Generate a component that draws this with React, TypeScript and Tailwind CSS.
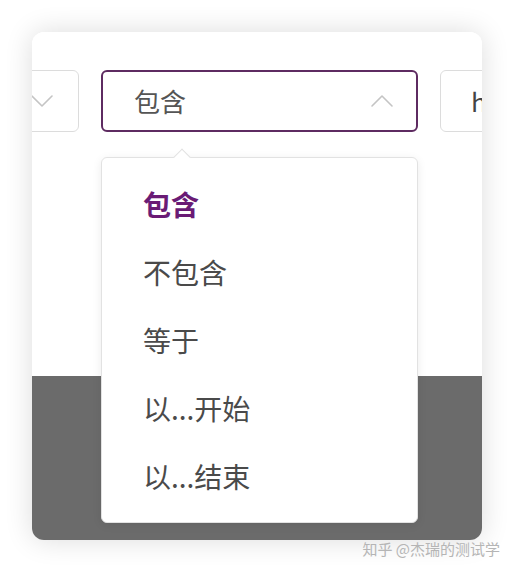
const items = ["包含", "不包含", "等于", "以...开始", "以...结束"];

function Chevron({ up }: { up?: boolean }) {
  return (
    <svg width="24" height="14" viewBox="0 0 24 14" fill="none" aria-hidden="true">
      <path
        d={up ? "M2 12 L12 2 L22 12" : "M2 2 L12 12 L22 2"}
        stroke="#c4c4c4"
        strokeWidth="1.6"
        strokeLinecap="round"
        strokeLinejoin="round"
      />
    </svg>
  );
}

export default function App() {
  return (
    <div className="relative h-[572px] w-[514px] overflow-hidden bg-white pl-8 pt-8 font-['Noto_Sans_CJK_SC','Noto_Sans',sans-serif]">
      <div className="relative flex h-[508px] w-[450px] flex-col overflow-hidden rounded-[12px] bg-white shadow-[0_0_28px_rgba(0,0,0,0.14)]">
        <div className="h-[344px] bg-white pt-[38px]">
          <div className="flex items-start gap-[22px]">
            <div className="-ml-[60px] flex h-[62px] w-[107px] shrink-0 items-center justify-end rounded-[6px] border border-[#dcdcdc] pr-[24px]">
              <Chevron />
            </div>
            <div className="flex h-[62px] w-[317px] shrink-0 items-center justify-between rounded-[6px] border-2 border-[#5e2b61] pl-[31px] pr-[22px]">
              <span className="text-[26px] leading-none text-[#555]">包含</span>
              <Chevron up />
            </div>
            <div className="flex h-[62px] w-[120px] shrink-0 items-center rounded-[6px] border border-[#dcdcdc] pl-[30px]">
              <span className="text-[26px] leading-none text-[#444]">h</span>
            </div>
          </div>
        </div>
        <div className="flex-1 bg-[#6b6b6b]" />

        <div className="absolute left-[69px] top-[125px] w-[317px] rounded-[6px] border border-[#e2e2e2] bg-white py-[12px] shadow-[0_2px_10px_rgba(0,0,0,0.08)]">
          <div className="absolute -top-[7px] left-[74px] h-[12px] w-[12px] rotate-45 border-l border-t border-[#e2e2e2] bg-white" />
          {items.map((t, i) => (
            <div
              key={t}
              className={
                i === 0
                  ? "flex h-[68px] items-center pl-[41px] text-[28px] font-bold text-[#6a1b75]"
                  : "flex h-[68px] items-center pl-[41px] text-[28px] text-[#4a4a4a]"
              }
            >
              {t}
            </div>
          ))}
        </div>
      </div>
      <div className="absolute right-[14px] top-[538px] text-[15px] text-[#b5b5b5]">
        知乎 @杰瑞的测试学
      </div>
    </div>
  );
}
